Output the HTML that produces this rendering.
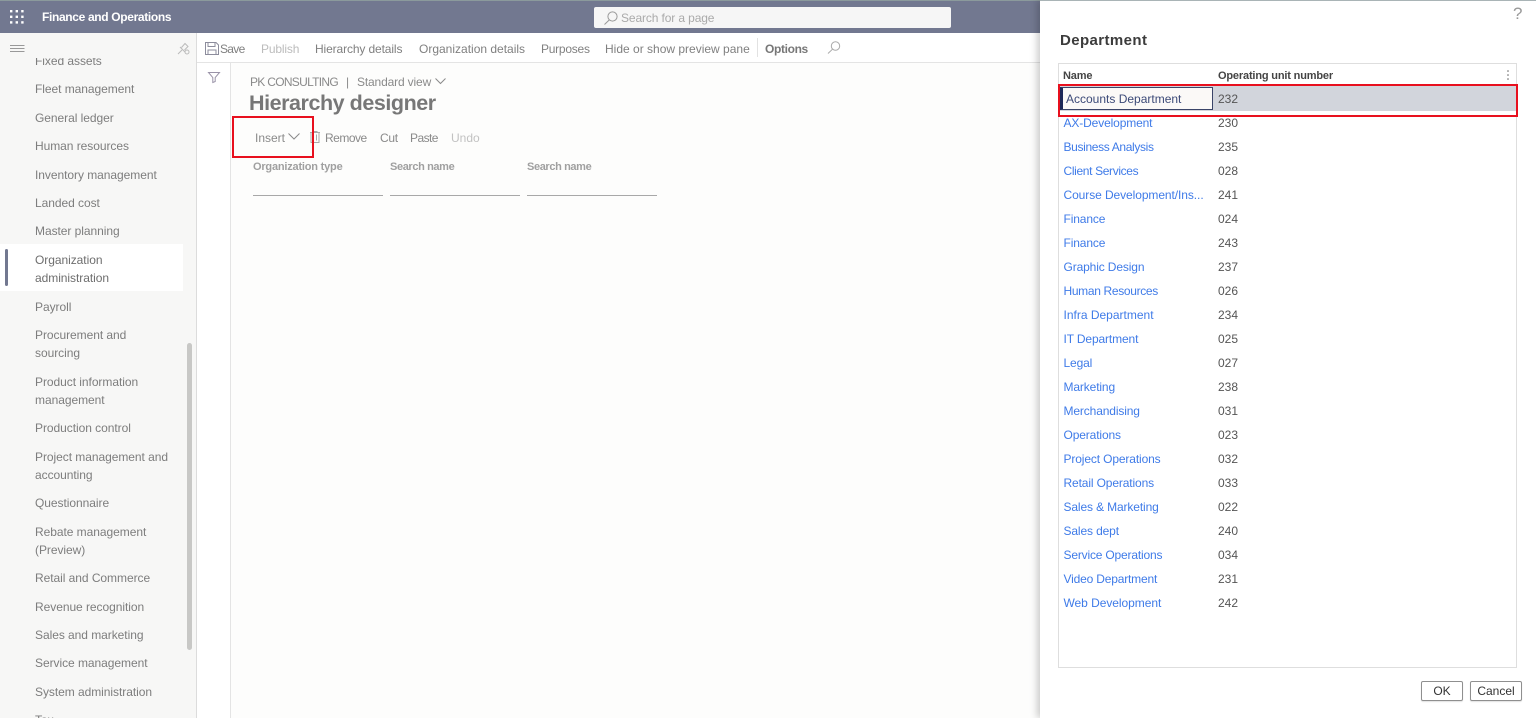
<!DOCTYPE html>
<html lang="en"><head><meta charset="utf-8"><title>Hierarchy designer</title>
<style>
html,body{margin:0;padding:0;width:1536px;height:718px;overflow:hidden;background:#fdfdfc;font-family:"Liberation Sans",sans-serif;}
#p{position:relative;width:1536px;height:718px;overflow:hidden;filter:blur(.35px);}
.a{position:absolute;}
.t{position:absolute;white-space:nowrap;line-height:18px;font-size:12px;}
.s{color:#7d7d7d;left:35px;letter-spacing:-.05px;}
.c{color:#808080;top:40px;}
.l{color:#3f7be8;left:1063.5px;letter-spacing:-.13px;}
.n{color:#555;left:1218px;}
svg{position:absolute;overflow:visible;}
</style></head><body><div id="p">

<!-- top bar -->
<div class="a" style="left:0;top:0;width:1040px;height:33px;background:#727890;border-top:1px solid #8b9a9c;box-sizing:border-box;"></div>
<svg style="left:10px;top:10px" width="15" height="15"><g fill="#fff"><rect x="0" y="0" width="2.4" height="2.4"/><rect x="5.6" y="0" width="2.4" height="2.4"/><rect x="11.2" y="0" width="2.4" height="2.4"/><rect x="0" y="5.6" width="2.4" height="2.4"/><rect x="5.6" y="5.6" width="2.4" height="2.4"/><rect x="11.2" y="5.6" width="2.4" height="2.4"/><rect x="0" y="11.2" width="2.4" height="2.4"/><rect x="5.6" y="11.2" width="2.4" height="2.4"/><rect x="11.2" y="11.2" width="2.4" height="2.4"/></g></svg>
<div class="t" style="left:42px;top:8px;color:#fff;font-weight:bold;letter-spacing:-.34px;">Finance and Operations</div>
<div class="a" style="left:594px;top:7px;width:357px;height:21px;background:#f6f6f6;border-radius:2px;"></div>
<svg style="left:603px;top:11px" width="16" height="14"><circle cx="9.5" cy="5.5" r="4.6" fill="none" stroke="#999" stroke-width="1"/><path d="M6.2 9 L1.5 13.5" stroke="#999" stroke-width="1"/></svg>
<div class="t" style="left:621px;top:9px;color:#aaa;letter-spacing:-.12px;">Search for a page</div>

<!-- sidebar -->
<div class="a" style="left:0;top:33px;width:196px;height:685px;background:#f7f7f6;border-right:1px solid #dcdcdc;"></div>
<svg style="left:10px;top:45px" width="15" height="8"><path d="M0 .5H14.5M0 3.5H14.5M0 6.5H14.5" stroke="#999" stroke-width="1"/></svg>
<svg style="left:177px;top:42px" width="13" height="13"><path d="M1 12 L5 8 M3 5 L8 10 M4.5 5.5 L8 1.5 L11 4.5 L7.5 8" fill="none" stroke="#bbb" stroke-width="1"/><circle cx="10" cy="10" r="2" fill="none" stroke="#bbb"/></svg>
<div class="t s" style="top:52px;clip-path:inset(6px 0 0 0);">Fixed assets</div>
<div class="t s" style="top:80px;">Fleet management</div>
<div class="t s" style="top:109px;">General ledger</div>
<div class="t s" style="top:137px;">Human resources</div>
<div class="t s" style="top:166px;">Inventory management</div>
<div class="t s" style="top:194px;">Landed cost</div>
<div class="t s" style="top:222px;">Master planning</div>
<div class="a" style="left:0;top:244px;width:183px;height:47px;background:#fff;"></div>
<div class="a" style="left:5px;top:249px;width:3px;height:37px;background:#727890;border-radius:2px;"></div>
<div class="t s" style="top:251px;color:#6e6e6e;">Organization</div>
<div class="t s" style="top:269px;color:#6e6e6e;">administration</div>
<div class="t s" style="top:298px;">Payroll</div>
<div class="t s" style="top:326px;">Procurement and</div>
<div class="t s" style="top:344px;">sourcing</div>
<div class="t s" style="top:373px;">Product information</div>
<div class="t s" style="top:391px;">management</div>
<div class="t s" style="top:419px;">Production control</div>
<div class="t s" style="top:448px;">Project management and</div>
<div class="t s" style="top:466px;">accounting</div>
<div class="t s" style="top:494px;">Questionnaire</div>
<div class="t s" style="top:523px;">Rebate management</div>
<div class="t s" style="top:541px;">(Preview)</div>
<div class="t s" style="top:569px;">Retail and Commerce</div>
<div class="t s" style="top:598px;">Revenue recognition</div>
<div class="t s" style="top:626px;">Sales and marketing</div>
<div class="t s" style="top:654px;">Service management</div>
<div class="t s" style="top:683px;">System administration</div>
<div class="t s" style="top:711px;">Tax</div>
<div class="a" style="left:187px;top:343px;width:5px;height:307px;background:#c8c8c6;border-radius:3px;"></div>

<!-- command bar -->
<div class="a" style="left:197px;top:33px;width:843px;height:30px;background:#fff;border-bottom:1px solid #e4e4e4;box-sizing:border-box;"></div>
<svg style="left:205px;top:42px" width="14" height="13"><path d="M.5 .5H11L13.5 3V12.5H.5Z" fill="none" stroke="#8c8c9c" stroke-width="1"/><path d="M3 .5V4.5H10V.5M3 12.5V8H11V12.5" fill="none" stroke="#8c8c9c" stroke-width="1"/></svg>
<div class="t c" style="left:220px;letter-spacing:-.7px;">Save</div>
<div class="t c" style="left:261px;color:#bcbcbc;letter-spacing:-.15px;">Publish</div>
<div class="t c" style="left:315px;letter-spacing:-.12px;">Hierarchy details</div>
<div class="t c" style="left:419px;">Organization details</div>
<div class="t c" style="left:541px;letter-spacing:-.25px;">Purposes</div>
<div class="t c" style="left:605px;">Hide or show preview pane</div>
<div class="a" style="left:757px;top:38px;width:1px;height:19px;background:#e2e2e2;"></div>
<div class="t c" style="left:765px;font-weight:bold;color:#777;letter-spacing:-.35px;">Options</div>
<svg style="left:827px;top:41px" width="14" height="13"><circle cx="8.5" cy="5" r="4.2" fill="none" stroke="#aaa" stroke-width="1"/><path d="M5.5 8.2 L1 12.5" stroke="#aaa" stroke-width="1"/></svg>

<!-- filter strip -->
<div class="a" style="left:230px;top:63px;width:1px;height:655px;background:#e4e4e4;"></div>
<div class="a" style="left:197px;top:63px;width:33px;height:655px;background:#fff;"></div>
<svg style="left:208px;top:72px" width="12" height="11"><path d="M.5 .5H11.5L7.2 5.5V9.5L4.8 10.5V5.5Z" fill="none" stroke="#9a93a8" stroke-width="1"/></svg>

<!-- page header -->
<div class="t" style="left:250px;top:73px;color:#8a8a8a;letter-spacing:-.7px;">PK CONSULTING</div>
<div class="t" style="left:346px;top:73px;color:#8a8a8a;">|</div>
<div class="t" style="left:357px;top:73px;color:#8a8a8a;letter-spacing:-.15px;">Standard view</div>
<svg style="left:435px;top:78px" width="11" height="7"><path d="M.5 .5 L5.5 5.5 L10.5 .5" fill="none" stroke="#8a8a8a" stroke-width="1"/></svg>
<div class="t" style="left:249px;top:90px;color:#777;font-size:21.5px;font-weight:bold;line-height:26px;letter-spacing:-.45px;">Hierarchy designer</div>

<!-- toolbar -->
<div class="t" style="left:255px;top:129px;color:#8a8a8a;">Insert</div>
<svg style="left:288px;top:133px" width="12" height="7"><path d="M.5 .5 L6 6 L11.5 .5" fill="none" stroke="#8a8a8a" stroke-width="1"/></svg>
<svg style="left:310px;top:131px" width="10" height="12"><path d="M0 1.5H10M3 1.5V.5H7V1.5M1 1.5V11.5H9V1.5M3.5 3.5V9.5M6.5 3.5V9.5" fill="none" stroke="#a9a9a9" stroke-width="1"/></svg>
<div class="t" style="left:325px;top:129px;color:#8a8a8a;letter-spacing:-.5px;">Remove</div>
<div class="t" style="left:380px;top:129px;color:#8a8a8a;letter-spacing:-.3px;">Cut</div>
<div class="t" style="left:410px;top:129px;color:#8a8a8a;letter-spacing:-.55px;">Paste</div>
<div class="t" style="left:451px;top:129px;color:#c2c2c2;">Undo</div>
<div class="a" style="left:232px;top:116px;width:82px;height:42px;border:2px solid #e8101e;box-sizing:border-box;"></div>

<!-- fields -->
<div class="t" style="left:253px;top:158px;color:#a0a0a0;font-size:11px;font-weight:bold;letter-spacing:-.2px;">Organization type</div>
<div class="t" style="left:390px;top:158px;color:#a0a0a0;font-size:11px;font-weight:bold;letter-spacing:-.38px;">Search name</div>
<div class="t" style="left:527px;top:158px;color:#a0a0a0;font-size:11px;font-weight:bold;letter-spacing:-.38px;">Search name</div>
<div class="a" style="left:253px;top:195px;width:130px;height:1px;background:#a8a8a8;"></div>
<div class="a" style="left:390px;top:195px;width:130px;height:1px;background:#a8a8a8;"></div>
<div class="a" style="left:527px;top:195px;width:130px;height:1px;background:#a8a8a8;"></div>

<!-- dialog -->
<div class="a" style="left:1040px;top:0;width:496px;height:718px;background:#fff;box-shadow:-3px 0 7px rgba(0,0,0,.2);border-top:1px solid #a9b4b6;box-sizing:border-box;"></div>
<div class="t" style="left:1513px;top:4px;font-size:17px;line-height:20px;color:#999;">?</div>
<div class="t" style="left:1060px;top:31px;font-size:15px;line-height:20px;font-weight:bold;color:#3c3c3c;letter-spacing:.4px;">Department</div>

<!-- grid -->
<div class="a" style="left:1058px;top:63px;width:459px;height:605px;border:1px solid #dedede;box-sizing:border-box;"></div>
<div class="t" style="left:1063px;top:67px;font-size:11px;font-weight:bold;color:#444;letter-spacing:-.15px;">Name</div>
<div class="t" style="left:1218px;top:67px;font-size:11px;font-weight:bold;color:#444;letter-spacing:-.17px;">Operating unit number</div>
<svg style="left:1507px;top:70px" width="3" height="11"><circle cx="1" cy="1" r=".8" fill="#666"/><circle cx="1" cy="5" r=".8" fill="#666"/><circle cx="1" cy="9" r=".8" fill="#666"/></svg>

<div class="a" style="left:1060px;top:86px;width:456px;height:25px;background:#d2d5dc;"></div>
<div class="a" style="left:1060px;top:87px;width:153px;height:23px;background:#fbf9f7;border:1px solid #3a4468;border-left:3px solid #1d2858;box-sizing:border-box;"></div>
<div class="t" style="left:1066px;top:90px;color:#3c4a78;">Accounts Department</div>
<div class="t n" style="top:90px;">232</div>
<div class="a" style="left:1058px;top:84px;width:460px;height:33px;border:2px solid #e8101e;box-sizing:border-box;"></div>

<div class="t l" style="top:114px;">AX-Development</div><div class="t n" style="top:114px;">230</div>
<div class="t l" style="top:138px;letter-spacing:-.35px;">Business Analysis</div><div class="t n" style="top:138px;">235</div>
<div class="t l" style="top:162px;letter-spacing:-.35px;">Client Services</div><div class="t n" style="top:162px;">028</div>
<div class="t l" style="top:186px;letter-spacing:-.08px;">Course Development/Ins...</div><div class="t n" style="top:186px;">241</div>
<div class="t l" style="top:210px;">Finance</div><div class="t n" style="top:210px;">024</div>
<div class="t l" style="top:234px;">Finance</div><div class="t n" style="top:234px;">243</div>
<div class="t l" style="top:258px;">Graphic Design</div><div class="t n" style="top:258px;">237</div>
<div class="t l" style="top:282px;letter-spacing:-.33px;">Human Resources</div><div class="t n" style="top:282px;">026</div>
<div class="t l" style="top:306px;letter-spacing:0;">Infra Department</div><div class="t n" style="top:306px;">234</div>
<div class="t l" style="top:330px;">IT Department</div><div class="t n" style="top:330px;">025</div>
<div class="t l" style="top:354px;">Legal</div><div class="t n" style="top:354px;">027</div>
<div class="t l" style="top:378px;">Marketing</div><div class="t n" style="top:378px;">238</div>
<div class="t l" style="top:402px;">Merchandising</div><div class="t n" style="top:402px;">031</div>
<div class="t l" style="top:426px;">Operations</div><div class="t n" style="top:426px;">023</div>
<div class="t l" style="top:450px;">Project Operations</div><div class="t n" style="top:450px;">032</div>
<div class="t l" style="top:474px;">Retail Operations</div><div class="t n" style="top:474px;">033</div>
<div class="t l" style="top:498px;">Sales &amp; Marketing</div><div class="t n" style="top:498px;">022</div>
<div class="t l" style="top:522px;">Sales dept</div><div class="t n" style="top:522px;">240</div>
<div class="t l" style="top:546px;letter-spacing:-.18px;">Service Operations</div><div class="t n" style="top:546px;">034</div>
<div class="t l" style="top:570px;letter-spacing:-.18px;">Video Department</div><div class="t n" style="top:570px;">231</div>
<div class="t l" style="top:594px;letter-spacing:-.05px;">Web Development</div><div class="t n" style="top:594px;">242</div>

<!-- buttons -->
<div class="a" style="left:1421px;top:681px;width:42px;height:20px;border:1px solid #8f8f8f;border-radius:2px;box-sizing:border-box;box-shadow:0 1px 1px rgba(0,0,0,.12);text-align:center;font-size:12px;line-height:18px;color:#333;">OK</div>
<div class="a" style="left:1470px;top:681px;width:52px;height:20px;border:1px solid #8f8f8f;border-radius:2px;box-sizing:border-box;box-shadow:0 1px 1px rgba(0,0,0,.12);text-align:center;font-size:12px;line-height:18px;color:#333;">Cancel</div>

</div></body></html>
